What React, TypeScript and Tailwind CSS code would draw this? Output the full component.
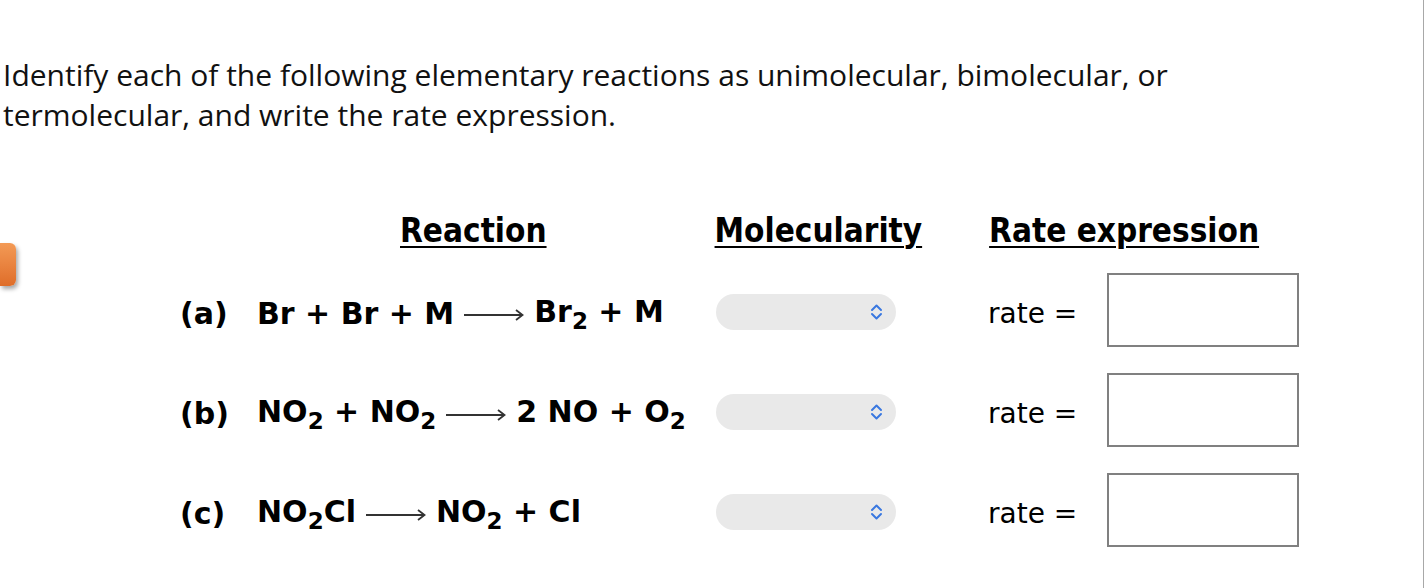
import type { ReactNode } from "react";

const chem = { fontFamily: '"DejaVu Sans", Verdana, sans-serif' };
const head = { fontFamily: '"DejaVu Sans Condensed", "DejaVu Sans", sans-serif' };
const body = { fontFamily: '"Open Sans", "Liberation Sans", sans-serif' };

function Sub({ children }: { children: ReactNode }) {
  return <span className="text-[23px] align-[-7px]">{children}</span>;
}

function Arrow() {
  return (
    <svg width="60" height="14" viewBox="0 0 60 14" className="mx-[10px] inline-block shrink-0">
      <line x1="0" y1="8" x2="58" y2="8" stroke="#333" strokeWidth="1.8" />
      <polyline points="52,3 58.5,8 52,13" fill="none" stroke="#333" strokeWidth="1.8" />
    </svg>
  );
}

function Chevrons() {
  return (
    <svg width="13" height="18" viewBox="0 0 13 18">
      <polyline points="2,7 6.5,2.5 11,7" fill="none" stroke="#3a78e0" strokeWidth="2" strokeLinecap="round" strokeLinejoin="round" />
      <polyline points="2,11 6.5,15.5 11,11" fill="none" stroke="#3a78e0" strokeWidth="2" strokeLinecap="round" strokeLinejoin="round" />
    </svg>
  );
}

interface RowProps {
  label: string;
  left: ReactNode;
  right: ReactNode;
}

function Row({ label, left, right }: RowProps) {
  return (
    <div className="flex h-[100px] items-center">
      <div className="flex w-[536px] items-center pt-[3px] text-[30px] font-bold text-black" style={chem}>
        <span className="w-[77px] shrink-0">{label}</span>
        <span className="whitespace-nowrap">{left}</span>
        <Arrow />
        <span className="whitespace-nowrap">{right}</span>
      </div>
      <div className="flex h-[36px] w-[180px] items-center justify-end rounded-full bg-[#e9e9e9] pr-[13px]">
        <Chevrons />
      </div>
      <div className="ml-[92px] w-[119px] pt-[3px] text-[28px] text-black" style={chem}>
        rate =
      </div>
      <div className="mb-[4px] h-[74px] w-[192px] border-2 border-[#808080] bg-white" />
    </div>
  );
}

export default function App() {
  return (
    <div className="relative h-[588px] w-[1424px] overflow-hidden border-r border-[#a8a8a8] bg-white">
      <div className="pl-[3px] pt-[55px] text-[30px] leading-[40px] text-[#111]" style={body}>
        <p>Identify each of the following elementary reactions as unimolecular, bimolecular, or</p>
        <p>termolecular, and write the rate expression.</p>
      </div>

      <div
        className="absolute left-0 top-[243px] h-[43px] w-[16px] rounded-r-[6px] bg-gradient-to-b from-[#f39a55] to-[#df6d28] shadow-[2px_3px_4px_rgba(0,0,0,0.35)]"
      />

      <div className="mt-[76px] flex h-[40px] items-center text-[33px] font-bold leading-[40px] text-black" style={head}>
        <span className="ml-[400px] underline decoration-2 underline-offset-[4px]">Reaction</span>
        <span className="ml-[168px] underline decoration-2 underline-offset-[4px]">Molecularity</span>
        <span className="ml-[67px] underline decoration-2 underline-offset-[4px]">Rate expression</span>
      </div>

      <div className="mt-[11px] pl-[180px]">
        <Row
          label="(a)"
          left={<>Br + Br + M</>}
          right={
            <>
              Br<Sub>2</Sub> + M
            </>
          }
        />
        <Row
          label="(b)"
          left={
            <>
              NO<Sub>2</Sub> + NO<Sub>2</Sub>
            </>
          }
          right={
            <>
              2 NO + O<Sub>2</Sub>
            </>
          }
        />
        <Row
          label="(c)"
          left={
            <>
              NO<Sub>2</Sub>Cl
            </>
          }
          right={
            <>
              NO<Sub>2</Sub> + Cl
            </>
          }
        />
      </div>
    </div>
  );
}
